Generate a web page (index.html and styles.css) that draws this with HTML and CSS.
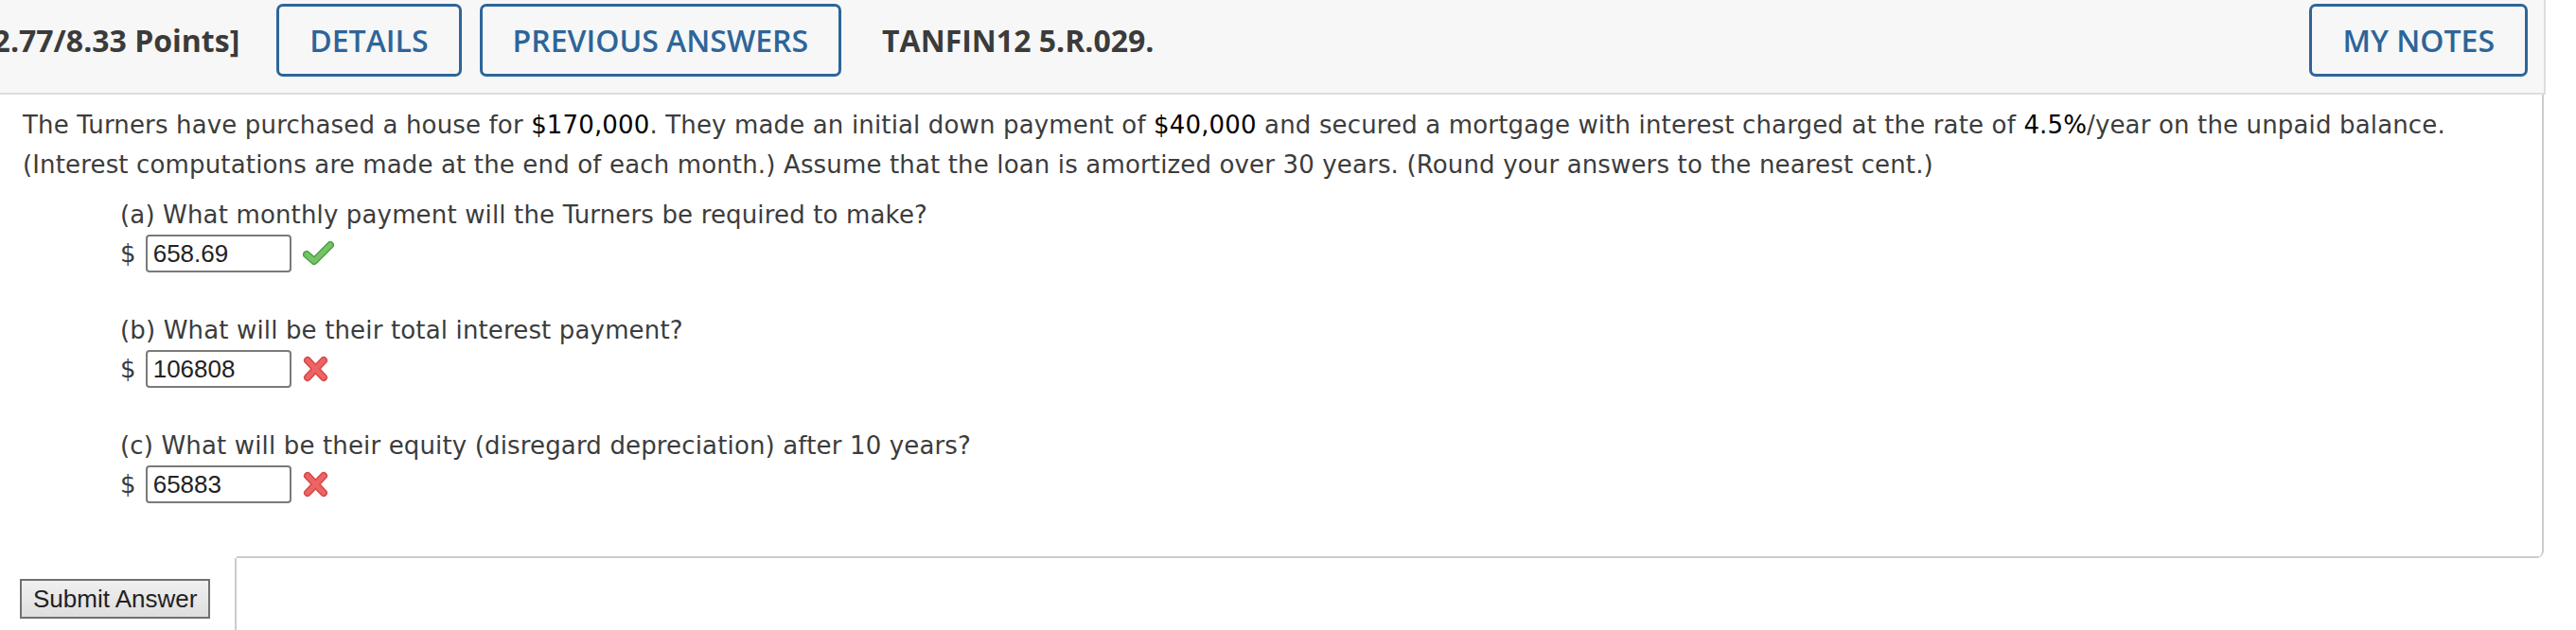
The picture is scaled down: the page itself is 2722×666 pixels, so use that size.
FILE: index.html
```html
<!DOCTYPE html>
<html lang="en">
<head>
<meta charset="utf-8">
<title>TANFIN12 5.R.029.</title>
<link rel="stylesheet" href="styles.css">
</head>
<body>
<div class="page">
  <header class="qhead">
    <span class="points">[2.77/8.33 Points]</span>
    <button class="hbtn">DETAILS</button>
    <button class="hbtn">PREVIOUS ANSWERS</button>
    <span class="qid">TANFIN12 5.R.029.</span>
    <button class="hbtn notes">MY NOTES</button>
  </header>

  <section class="qbody">
    <p class="stem">The Turners have purchased a house for <span class="num">$170,000</span>. They made an initial down payment of <span class="num">$40,000</span> and secured a mortgage with interest charged at the rate of <span class="num">4.5%</span>/year on the unpaid balance. (Interest computations are made at the end of each month.) Assume that the loan is amortized over 30 years. (Round your answers to the nearest cent.)</p>

    <div class="parts">
      <div class="part">
        <div class="prompt">(a) What monthly payment will the Turners be required to make?</div>
        <div class="answer">
          <span class="cur">$</span>
          <span class="field">658.69</span>
          <svg class="mark" width="33" height="27" viewBox="0 0 33 27" aria-hidden="true">
            <path d="M4 15 L12 22 L29 5" fill="none" stroke="#4f9f48" stroke-width="8" stroke-linecap="round" stroke-linejoin="round"/>
            <path d="M4 15 L12 22 L29 5" fill="none" stroke="#74c466" stroke-width="5" stroke-linecap="round" stroke-linejoin="round"/>
          </svg>
        </div>
      </div>

      <div class="part">
        <div class="prompt">(b) What will be their total interest payment?</div>
        <div class="answer">
          <span class="cur">$</span>
          <span class="field">106808</span>
          <svg class="mark" width="27" height="28" viewBox="0 0 27 28" aria-hidden="true">
            <path d="M5 5 L22 23 M22 5 L5 23" fill="none" stroke="#d84848" stroke-width="8" stroke-linecap="round"/>
            <path d="M5 5 L22 23 M22 5 L5 23" fill="none" stroke="#ec6464" stroke-width="5" stroke-linecap="round"/>
          </svg>
        </div>
      </div>

      <div class="part">
        <div class="prompt">(c) What will be their equity (disregard depreciation) after 10 years?</div>
        <div class="answer">
          <span class="cur">$</span>
          <span class="field">65883</span>
          <svg class="mark" width="27" height="28" viewBox="0 0 27 28" aria-hidden="true">
            <path d="M5 5 L22 23 M22 5 L5 23" fill="none" stroke="#d84848" stroke-width="8" stroke-linecap="round"/>
            <path d="M5 5 L22 23 M22 5 L5 23" fill="none" stroke="#ec6464" stroke-width="5" stroke-linecap="round"/>
          </svg>
        </div>
      </div>
    </div>
  </section>

  <div class="foot">
    <div class="submit-cell"><button class="submit">Submit Answer</button></div>
    <div class="next"></div>
  </div>
</div>
</body>
</html>
```

FILE: styles.css
```css
html, body {
  margin: 0;
  padding: 0;
  background: #ffffff;
  overflow: hidden;
}

.page {
  width: 2690px;
}

/* ---------- header ---------- */
.qhead {
  display: flex;
  align-items: center;
  height: 100px;
  box-sizing: border-box;
  background: #f7f7f7;
  border-bottom: 2px solid #dddddd;
  border-right: 2px solid #dddddd;
  font-family: "Open Sans", "DejaVu Sans", sans-serif;
  font-size: 32px;
  padding-bottom: 13px;
  padding-right: 17px;
}

.points {
  font-weight: 700;
  color: #3b3b3b;
  margin-left: -18px;
  margin-right: 39px;
  white-space: nowrap;
}

.hbtn {
  font-family: "Open Sans", "DejaVu Sans", sans-serif;
  font-size: 32px;
  font-weight: 600;
  color: #2d6599;
  background: #f7f7f7;
  border: 3px solid #2d6599;
  border-radius: 7px;
  height: 77px;
  padding: 0 32px;
  margin-right: 19px;
  line-height: 1;
  white-space: nowrap;
}

.qid {
  font-weight: 700;
  color: #3b3b3b;
  margin-left: 24px;
  white-space: nowrap;
}

.hbtn.notes {
  margin-left: auto;
  margin-right: 0;
}

/* ---------- question body ---------- */
.qbody {
  box-sizing: border-box;
  height: 490px;
  border-right: 2px solid #cccccc;
  border-bottom-right-radius: 8px;
  background-image: linear-gradient(#cccccc, #cccccc);
  background-repeat: no-repeat;
  background-position: right bottom;
  background-size: calc(100% - 250px) 2px;
  padding: 11px 20px 0 24px;
  font-family: Verdana, "DejaVu Sans", sans-serif;
  font-size: 26px;
  letter-spacing: 0.15px;
  color: #3c3c3c;
  margin-right: 2px;
}

.stem {
  margin: 0;
  line-height: 42px;
}

.num {
  color: #000000;
}

.parts {
  padding-left: 103px;
  margin-top: 12px;
}

.part {
  margin-bottom: 41px;
}

.prompt {
  line-height: 40px;
}

.answer {
  display: flex;
  align-items: center;
  height: 41px;
}

.cur {
  margin-right: 10px;
}

.field {
  box-sizing: border-box;
  width: 154px;
  height: 40px;
  border: 2px solid #7a7a7a;
  border-radius: 4px;
  padding: 0 6px;
  font-family: "Liberation Sans", Arial, sans-serif;
  font-size: 26px;
  letter-spacing: 0;
  color: #222222;
  line-height: 36px;
  background: #ffffff;
}

.mark {
  margin-left: 12px;
}

/* ---------- footer ---------- */
.foot {
  display: flex;
  height: 80px;
}

.submit-cell {
  width: 248px;
  padding: 22px 0 0 21px;
  box-sizing: border-box;
}

.submit {
  font-family: "Liberation Sans", Arial, sans-serif;
  font-size: 26px;
  color: #222222;
  height: 42px;
  padding: 0 12px;
  background: linear-gradient(#f0f0f0, #dedede);
  border: 2px solid #707070;
  border-radius: 0;
  white-space: nowrap;
}

.next {
  flex: 1;
  border-left: 2px solid #cccccc;
}
```
